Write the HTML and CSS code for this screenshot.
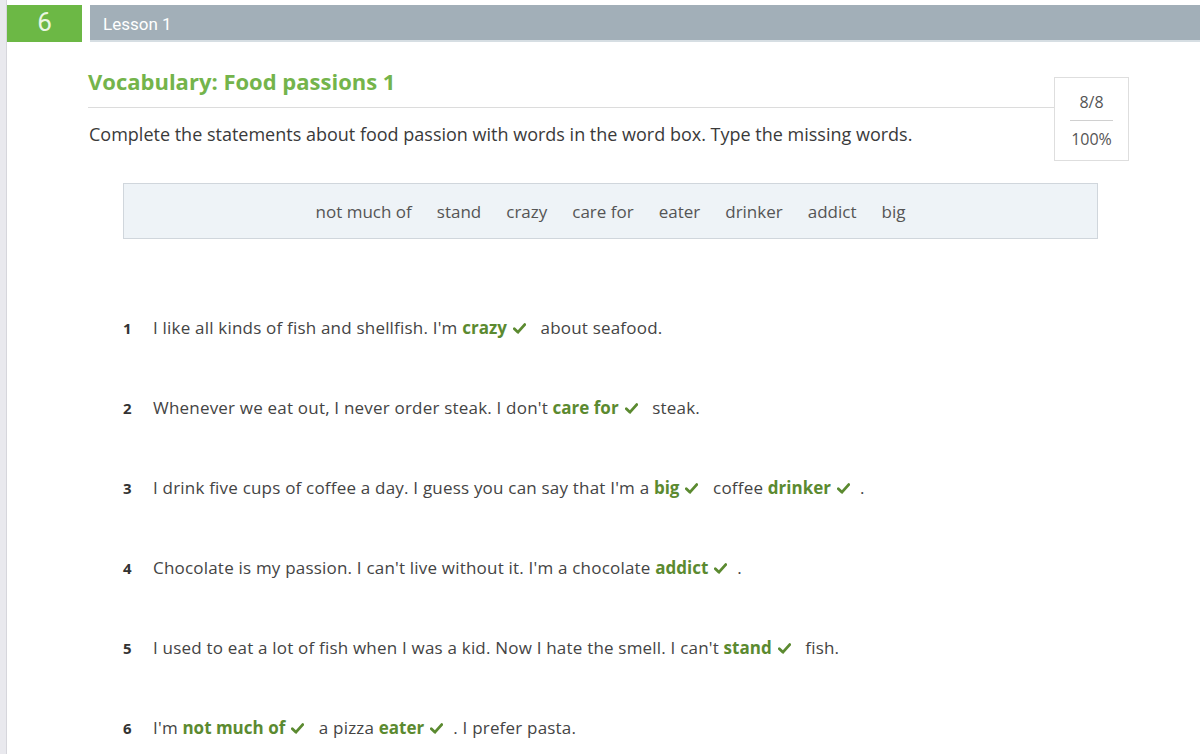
FILE: index.html
```html
<!DOCTYPE html>
<html>
<head>
<meta charset="utf-8">
<link rel="stylesheet" href="styles.css">
</head>
<body>
<div class="frame">
  <div class="rail"></div>
  <div class="main">
    <div class="header">
      <div class="num">6</div>
      <div class="lesson">Lesson 1</div>
    </div>
    <div class="content">
      <div class="top">
        <div class="intro">
          <h1 class="title">Vocabulary: Food passions 1</h1>
          <p class="instr">Complete the statements about food passion with words in the word box. Type the missing words.</p>
        </div>
        <div class="score">
          <div class="score-num">8/8</div>
          <div class="score-pct">100%</div>
        </div>
      </div>
      <div class="wordbox">
        <span>not much of</span><span>stand</span><span>crazy</span><span>care for</span><span>eater</span><span>drinker</span><span>addict</span><span>big</span>
      </div>
      <ol class="items">
        <li><span class="n">1</span><span class="t">I like all kinds of fish and shellfish. I'm <span class="ans">crazy<svg class="ck" viewBox="0 0 12 10"><path d="M1.2 5.2 L4.6 8.4 L10.8 1.4"/></svg></span> about seafood.</span></li>
        <li><span class="n">2</span><span class="t">Whenever we eat out, I never order steak. I don't <span class="ans">care for<svg class="ck" viewBox="0 0 12 10"><path d="M1.2 5.2 L4.6 8.4 L10.8 1.4"/></svg></span> steak.</span></li>
        <li><span class="n">3</span><span class="t">I drink five cups of coffee a day. I guess you can say that I'm a <span class="ans">big<svg class="ck" viewBox="0 0 12 10"><path d="M1.2 5.2 L4.6 8.4 L10.8 1.4"/></svg></span> coffee <span class="ans">drinker<svg class="ck" viewBox="0 0 12 10"><path d="M1.2 5.2 L4.6 8.4 L10.8 1.4"/></svg></span>.</span></li>
        <li><span class="n">4</span><span class="t">Chocolate is my passion. I can't live without it. I'm a chocolate <span class="ans">addict<svg class="ck" viewBox="0 0 12 10"><path d="M1.2 5.2 L4.6 8.4 L10.8 1.4"/></svg></span>.</span></li>
        <li><span class="n">5</span><span class="t">I used to eat a lot of fish when I was a kid. Now I hate the smell. I can't <span class="ans">stand<svg class="ck" viewBox="0 0 12 10"><path d="M1.2 5.2 L4.6 8.4 L10.8 1.4"/></svg></span> fish.</span></li>
        <li><span class="n">6</span><span class="t">I'm <span class="ans">not much of<svg class="ck" viewBox="0 0 12 10"><path d="M1.2 5.2 L4.6 8.4 L10.8 1.4"/></svg></span> a pizza <span class="ans">eater<svg class="ck" viewBox="0 0 12 10"><path d="M1.2 5.2 L4.6 8.4 L10.8 1.4"/></svg></span>. I prefer pasta.</span></li>
      </ol>
    </div>
  </div>
</div>
</body>
</html>
```
FILE: styles.css
```css
html, body {
  margin: 0;
  padding: 0;
  background: #ffffff;
  font-family: "Open Sans", "Liberation Sans", sans-serif;
  color: #333333;
}
.frame {
  display: flex;
  min-height: 754px;
  overflow: hidden;
}
.rail {
  width: 6px;
  flex: 0 0 6px;
  background: #e9e9ee;
  border-right: 1px solid #d6d6dc;
}
.main {
  flex: 1;
  padding-top: 5px;
}
.header {
  display: flex;
  gap: 8px;
  height: 37px;
}
.num {
  width: 75px;
  background: #6cb845;
  color: #eaf6e2;
  font-size: 26px;
  line-height: 35px;
  text-align: center;
  font-family: "Roboto", "Open Sans", sans-serif;
}
.lesson {
  flex: 1;
  background: #a2afb8;
  color: #ffffff;
  font-size: 17px;
  line-height: 38px;
  padding-left: 13px;
  border-bottom: 2px solid #d6dee3;
  box-sizing: border-box;
  font-family: "Roboto", "Open Sans", sans-serif;
}
.content {
  padding: 0 71px 0 81px;
}
.top {
  display: flex;
  align-items: flex-start;
}
.intro {
  flex: 1;
  padding-top: 25px;
}
.title {
  margin: 0;
  font-size: 22px;
  font-weight: 700;
  color: #74b44b;
  line-height: 28px;
  padding-bottom: 12px;
  border-bottom: 1px solid #dcdcdc;
}
.instr {
  margin: 15px 0 0 1px;
  font-size: 18px;
  line-height: 22px;
  color: #3a3a3a;
  letter-spacing: 0;
}
.score {
  margin-top: 35px;
  width: 75px;
  height: 84px;
  box-sizing: border-box;
  border: 1px solid #dedede;
  display: flex;
  flex-direction: column;
  align-items: center;
  font-size: 16px;
  color: #555555;
}
.score-num {
  padding-top: 13px;
  line-height: 22px;
  width: 43px;
  text-align: center;
  padding-bottom: 7px;
  border-bottom: 1px solid #d0d0d0;
}
.score-pct {
  padding-top: 7px;
  line-height: 22px;
}
.wordbox {
  margin: 22px 31px 0 35px;
  height: 56px;
  box-sizing: border-box;
  background: #eef3f7;
  border: 1px solid #d0d6dc;
  display: flex;
  justify-content: center;
  align-items: center;
  gap: 25px;
  font-size: 17px;
  color: #555555;
}
.items {
  list-style: none;
  margin: 78px 0 0 35px;
  padding: 0;
  display: flex;
  flex-direction: column;
  gap: 58px;
}
.items li {
  display: flex;
  line-height: 22px;
  font-size: 17px;
  letter-spacing: 0.2px;
}
.n {
  width: 30px;
  flex: 0 0 30px;
  font-weight: 700;
  font-size: 15px;
  color: #333333;
}
.t {
  color: #444444;
}
.ans {
  font-weight: 700;
  color: #5b8a30;
  padding-right: 10px;
  letter-spacing: 0;
}
.ck {
  width: 13px;
  height: 11px;
  margin-left: 6px;
  vertical-align: 0px;
}
.ck path {
  fill: none;
  stroke: #5b8a30;
  stroke-width: 2.6;
  stroke-linecap: round;
  stroke-linejoin: round;
}
```
